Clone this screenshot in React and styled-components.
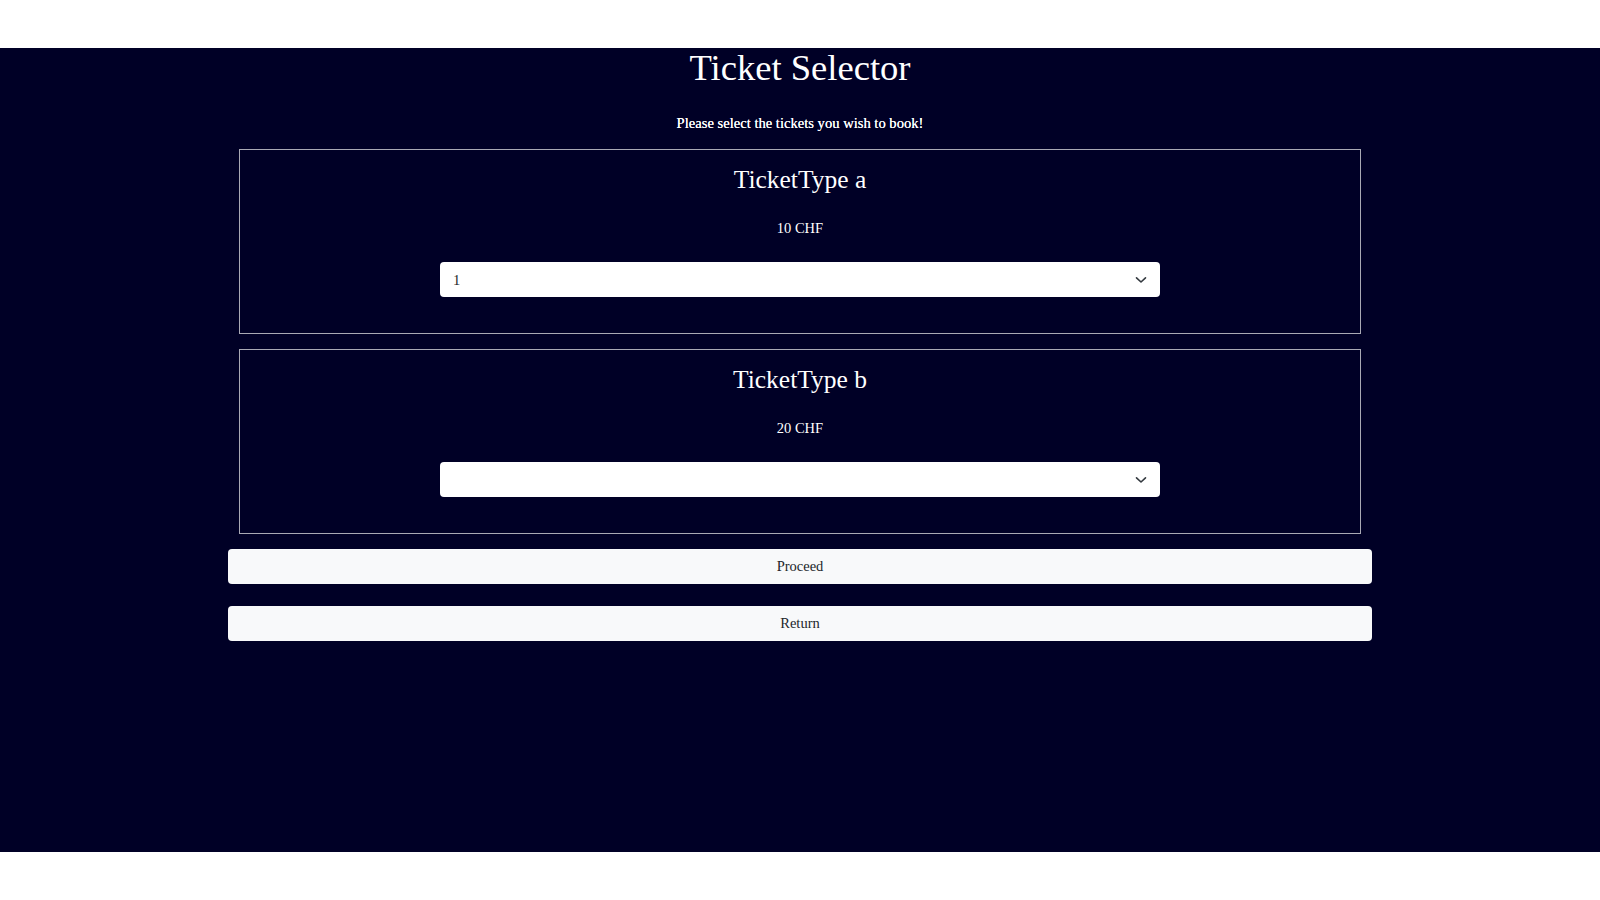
import React from "react";
import styled, { createGlobalStyle } from "styled-components";

const GlobalStyle = createGlobalStyle`
  html, body {
    margin: 0;
    padding: 0;
    background: #ffffff;
  }
  body {
    font-family: "Liberation Serif", "Times New Roman", serif;
  }
`;

const Page = styled.div`
  display: flex;
  flex-direction: column;
  min-height: 900px;
`;

const Band = styled.div`
  height: 48px;
  background: #ffffff;
`;

const Main = styled.main`
  height: 804px;
  background: #000026;
  color: #ffffff;
  display: flex;
  flex-direction: column;
  align-items: center;
`;

const Title = styled.h1`
  margin: 0;
  font-size: 36.6px;
  line-height: 40px;
  font-weight: normal;
`;

const Subtitle = styled.p`
  margin: 27px 0 17px;
  font-size: 14.6px;
  line-height: 17px;
  font-weight: normal;
  text-shadow: 0 0 0.4px #ffffff;
`;

const Content = styled.div`
  width: 1144px;
  display: flex;
  flex-direction: column;
`;

const TicketCard = styled.section`
  margin: 0 11px 15px;
  border: 1px solid #a9a9b4;
  padding: 15px 0 36px;
  display: flex;
  flex-direction: column;
  align-items: center;
`;

const TicketName = styled.h2`
  margin: 0;
  font-size: 25.5px;
  line-height: 30px;
  font-weight: normal;
`;

const Price = styled.p`
  margin: 25px 0 25px;
  font-size: 14.5px;
  line-height: 17px;
`;

const SelectWrap = styled.div`
  position: relative;
  width: 720px;
`;

const Select = styled.select`
  display: block;
  width: 100%;
  height: 35px;
  padding: 0 36px 0 13px;
  border: none;
  border-radius: 4px;
  background: #ffffff;
  color: #212529;
  font-family: "Liberation Serif", "Times New Roman", serif;
  font-size: 14.5px;
  appearance: none;
  -webkit-appearance: none;
  outline: none;
`;

const Chevron = styled.svg`
  position: absolute;
  right: 13px;
  top: 50%;
  transform: translateY(-50%);
  pointer-events: none;
`;

const Button = styled.button`
  height: 35px;
  border: none;
  border-radius: 4px;
  background: #f8f9fa;
  color: #212529;
  font-family: "Liberation Serif", "Times New Roman", serif;
  font-size: 14.5px;
  cursor: pointer;
  margin-bottom: ${({ $gap }) => $gap || 0}px;
`;

const tickets = [
  { name: "TicketType a", price: 10, value: "1" },
  { name: "TicketType b", price: 20, value: "" },
];

const TicketSelect = ({ value }) => (
  <SelectWrap>
    <Select defaultValue={value}>
      <option value=""></option>
      {[1, 2, 3, 4, 5].map((n) => (
        <option key={n} value={String(n)}>
          {n}
        </option>
      ))}
    </Select>
    <Chevron width="12" height="8" viewBox="0 0 12 8" fill="none">
      <path
        d="M1.5 1.8 L6 6 L10.5 1.8"
        stroke="#343a40"
        strokeWidth="1.6"
        strokeLinecap="round"
        strokeLinejoin="round"
      />
    </Chevron>
  </SelectWrap>
);

export default function App() {
  return (
    <Page>
      <GlobalStyle />
      <Band />
      <Main>
        <Title>Ticket Selector</Title>
        <Subtitle>Please select the tickets you wish to book!</Subtitle>
        <Content>
          {tickets.map((t) => (
            <TicketCard key={t.name}>
              <TicketName>{t.name}</TicketName>
              <Price>{t.price} CHF</Price>
              <TicketSelect value={t.value} />
            </TicketCard>
          ))}
          <Button $gap={22}>Proceed</Button>
          <Button>Return</Button>
        </Content>
      </Main>
      <Band />
    </Page>
  );
}
